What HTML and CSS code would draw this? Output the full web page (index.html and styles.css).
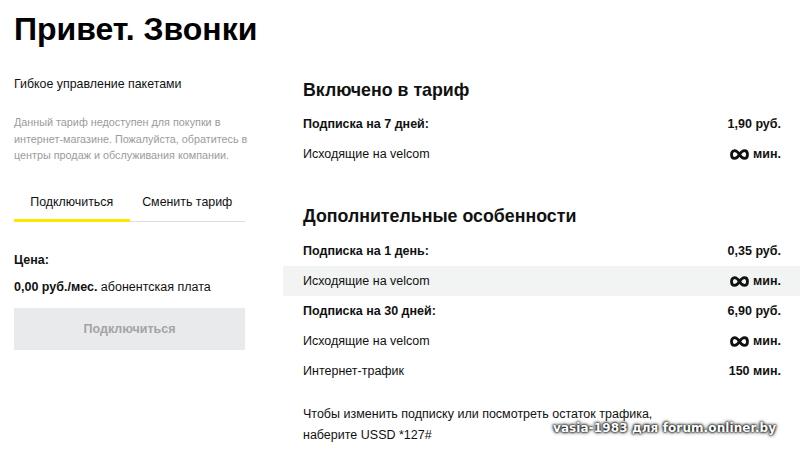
FILE: index.html
```html
<!DOCTYPE html>
<html lang="ru">
<head>
<meta charset="utf-8">
<title>Привет. Звонки</title>
<link rel="stylesheet" href="styles.css">
</head>
<body>
<div class="page">
  <h1 class="title">Привет. Звонки</h1>
  <div class="columns">
    <div class="left">
      <p class="subtitle">Гибкое управление пакетами</p>
      <p class="note">Данный тариф недоступен для покупки в интернет-магазине. Пожалуйста, обратитесь в центры продаж и обслуживания компании.</p>
      <div class="tabs">
        <div class="tab tab-active">Подключиться</div>
        <div class="tab">Сменить тариф</div>
      </div>
      <p class="price-label">Цена:</p>
      <p class="price"><b>0,00 руб./мес.</b> абонентская плата</p>
      <div class="button">Подключиться</div>
    </div>
    <div class="right">
      <h2 class="section-title">Включено в тариф</h2>
      <div class="row row-bold"><span>Подписка на 7 дней:</span><span class="val">1,90 руб.</span></div>
      <div class="row"><span>Исходящие на velcom</span><span class="val"><svg class="inf" width="19" height="11" viewBox="0 0 19 11"><path d="M9.5,5.5 C7.5,2.3 6,1.6 4.6,1.6 C2.6,1.6 1.5,3.4 1.5,5.5 C1.5,7.6 2.6,9.4 4.6,9.4 C6,9.4 7.5,8.7 9.5,5.5 C11.5,2.3 13,1.6 14.4,1.6 C16.4,1.6 17.5,3.4 17.5,5.5 C17.5,7.6 16.4,9.4 14.4,9.4 C13,9.4 11.5,8.7 9.5,5.5 Z" fill="none" stroke="#111" stroke-width="2.8"/></svg> мин.</span></div>

      <h2 class="section-title section-second">Дополнительные особенности</h2>
      <div class="row row-bold"><span>Подписка на 1 день:</span><span class="val">0,35 руб.</span></div>
      <div class="row row-shaded"><span>Исходящие на velcom</span><span class="val"><svg class="inf" width="19" height="11" viewBox="0 0 19 11"><path d="M9.5,5.5 C7.5,2.3 6,1.6 4.6,1.6 C2.6,1.6 1.5,3.4 1.5,5.5 C1.5,7.6 2.6,9.4 4.6,9.4 C6,9.4 7.5,8.7 9.5,5.5 C11.5,2.3 13,1.6 14.4,1.6 C16.4,1.6 17.5,3.4 17.5,5.5 C17.5,7.6 16.4,9.4 14.4,9.4 C13,9.4 11.5,8.7 9.5,5.5 Z" fill="none" stroke="#111" stroke-width="2.8"/></svg> мин.</span></div>
      <div class="row row-bold"><span>Подписка на 30 дней:</span><span class="val">6,90 руб.</span></div>
      <div class="row"><span>Исходящие на velcom</span><span class="val"><svg class="inf" width="19" height="11" viewBox="0 0 19 11"><path d="M9.5,5.5 C7.5,2.3 6,1.6 4.6,1.6 C2.6,1.6 1.5,3.4 1.5,5.5 C1.5,7.6 2.6,9.4 4.6,9.4 C6,9.4 7.5,8.7 9.5,5.5 C11.5,2.3 13,1.6 14.4,1.6 C16.4,1.6 17.5,3.4 17.5,5.5 C17.5,7.6 16.4,9.4 14.4,9.4 C13,9.4 11.5,8.7 9.5,5.5 Z" fill="none" stroke="#111" stroke-width="2.8"/></svg> мин.</span></div>
      <div class="row"><span>Интернет-трафик</span><span class="val">150 мин.</span></div>
      <p class="footer-note">Чтобы изменить подписку или посмотреть остаток трафика,<br>наберите USSD *127#</p>
    </div>
  </div>
</div>
<div class="watermark">vasia-1983 для forum.onliner.by</div>
</body>
</html>
```
FILE: styles.css
```css
html, body {
  margin: 0;
  padding: 0;
  background: #fff;
}
body {
  font-family: "Liberation Sans", Arial, sans-serif;
  color: #111;
  width: 800px;
  height: 451px;
  overflow: hidden;
  position: relative;
}
p { margin: 0; }
.page {
  padding-left: 14px;
}
.title {
  margin: 9px 0 0;
  font-size: 32px;
  line-height: 40px;
  font-weight: bold;
  color: #000;
}
.columns {
  display: flex;
}
.left {
  width: 231px;
  padding-top: 25px;
}
.subtitle {
  font-size: 12.4px;
  line-height: 20px;
}
.note {
  margin-top: 20px;
  margin-right: -6px;
  font-size: 10.8px;
  line-height: 16.6px;
  color: #9b9b9b;
}
.tabs {
  display: flex;
  margin-top: 29px;
}
.tab {
  flex: 1;
  text-align: center;
  font-size: 12.4px;
  line-height: 18px;
  padding-bottom: 10px;
  border-bottom: 1px solid #dedede;
}
.tab-active {
  padding-bottom: 8px;
  border-bottom: 3px solid #ffe600;
}
.price-label {
  margin-top: 28px;
  font-size: 12.5px;
  line-height: 20px;
  font-weight: bold;
}
.price {
  margin-top: 7px;
  font-size: 12.5px;
  line-height: 20px;
}
.button {
  margin-top: 11px;
  height: 42px;
  line-height: 42px;
  background: #e9eaeb;
  color: #a4a4a4;
  font-size: 12.5px;
  font-weight: bold;
  text-align: center;
}
.right {
  margin-left: 38px;
  width: 517px;
  padding-top: 29px;
}
.section-title {
  margin: 0 0 7px;
  padding-left: 20px;
  font-size: 17.8px;
  line-height: 24px;
  font-weight: bold;
}
.section-second {
  margin-top: 35px;
  margin-bottom: 8px;
}
.row {
  display: flex;
  justify-content: space-between;
  align-items: center;
  height: 30px;
  padding: 0 19px 0 20px;
  font-size: 12.5px;
}
.row-bold {
  font-weight: bold;
}
.row-shaded {
  background: #f2f3f3;
}
.val {
  font-weight: bold;
  display: flex;
  align-items: center;
  gap: 4px;
}
.inf {
  display: block;
}
.footer-note {
  margin-top: 18px;
  padding-left: 20px;
  font-size: 12.5px;
  line-height: 21px;
}
.watermark {
  position: absolute;
  left: 553px;
  top: 420px;
  font-family: "DejaVu Sans", Verdana, sans-serif;
  font-weight: bold;
  font-size: 12px;
  line-height: 16px;
  color: #fff;
  letter-spacing: 0.1px;
  text-shadow: 0 0 2px #000, 0 0 3px #000, 0 0 4px #333;
}
```
